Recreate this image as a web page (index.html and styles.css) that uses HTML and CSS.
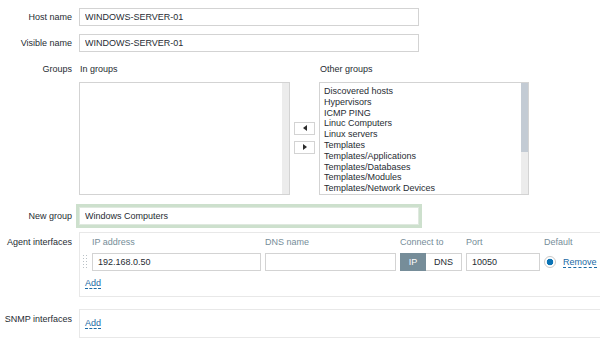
FILE: index.html
```html
<!DOCTYPE html>
<html>
<head>
    <meta charset="UTF-8">
    <title>Host</title>
    <link rel="stylesheet" href="styles.css">
</head>
<body>
    <div class="form">
        <div class="row">
            <label class="label">Host name</label>
            <input class="text wide" type="text" value="WINDOWS-SERVER-01">
        </div>
        <div class="row">
            <label class="label">Visible name</label>
            <input class="text wide" type="text" value="WINDOWS-SERVER-01">
        </div>

        <div class="row groups-row">
            <label class="label">Groups</label>
            <div class="groups">
                <div class="caption">In groups</div>
                <div></div>
                <div class="caption">Other groups</div>
                <div class="listbox">
                    <div class="items"></div>
                    <div class="scrollbar"></div>
                </div>
                <div class="move">
                    <button class="arrow"><svg width="4" height="6" viewBox="0 0 4 6"><path d="M4 0V6L0 3Z" fill="#2b2b2b"/></svg></button>
                    <button class="arrow"><svg width="4" height="6" viewBox="0 0 4 6"><path d="M0 0V6L4 3Z" fill="#2b2b2b"/></svg></button>
                </div>
                <div class="listbox">
                    <div class="items">
                        <div>Discovered hosts</div>
                        <div>Hypervisors</div>
                        <div>ICMP PING</div>
                        <div>Linuc Computers</div>
                        <div>Linux servers</div>
                        <div>Templates</div>
                        <div>Templates/Applications</div>
                        <div>Templates/Databases</div>
                        <div>Templates/Modules</div>
                        <div>Templates/Network Devices</div>
                    </div>
                    <div class="scrollbar"><div class="thumb" style="height: 62%"></div></div>
                </div>
            </div>
        </div>

        <div class="row newgroup-row">
            <label class="label">New group</label>
            <input class="text wide focused" type="text" value="Windows Computers">
        </div>

        <div class="row iface-row">
            <label class="label">Agent interfaces</label>
            <div class="iface-box">
                <div class="iface-grid">
                    <div></div>
                    <div class="head">IP address</div>
                    <div class="head">DNS name</div>
                    <div class="head">Connect to</div>
                    <div class="head">Port</div>
                    <div class="head">Default</div>

                    <div class="handle"><svg width="6" height="16" viewBox="0 0 6 16">
                        <g fill="#b9c1c6">
                            <rect x="0" y="1" width="1" height="1"/><rect x="3" y="1" width="1" height="1"/>
                            <rect x="0" y="4" width="1" height="1"/><rect x="3" y="4" width="1" height="1"/>
                            <rect x="0" y="7" width="1" height="1"/><rect x="3" y="7" width="1" height="1"/>
                            <rect x="0" y="10" width="1" height="1"/><rect x="3" y="10" width="1" height="1"/>
                            <rect x="0" y="13" width="1" height="1"/><rect x="3" y="13" width="1" height="1"/>
                        </g>
                    </svg></div>
                    <input class="text" type="text" value="192.168.0.50">
                    <input class="text" type="text" value="">
                    <div class="toggle">
                        <span class="opt active">IP</span>
                        <span class="opt">DNS</span>
                    </div>
                    <input class="text" type="text" value="10050">
                    <div class="default">
                        <span class="radio"></span>
                        <a class="link" href="#">Remove</a>
                    </div>
                </div>
                <a class="link add" href="#">Add</a>
            </div>
        </div>

        <div class="row iface-row snmp-row">
            <label class="label">SNMP interfaces</label>
            <div class="iface-box">
                <a class="link add" href="#">Add</a>
            </div>
        </div>
    </div>
</body>
</html>
```

FILE: styles.css
```css
html, body {
    margin: 0;
    overflow: hidden;
    background: #fff;
}
body {
    font-family: 'Liberation Sans', Arial, sans-serif;
    font-size: 9px;
    color: #1f2c33;
}
.form {
    padding-top: 8px;
    width: 680px;
}
.row {
    display: grid;
    grid-template-columns: 72px 1fr;
    column-gap: 7px;
    margin-bottom: 8px;
}
.label {
    text-align: right;
    line-height: 18px;
    white-space: nowrap;
}
.text {
    box-sizing: border-box;
    height: 18px;
    margin: 0;
    padding: 0 5px;
    border: 1px solid #d3d3d3;
    font-family: inherit;
    font-size: 9px;
    color: #1f2c33;
    background: #fff;
    outline: none;
}
.wide {
    width: 340px;
}
.focused {
    border-color: #dfe9df;
    box-shadow: 0 0 0 3px #cde0cd;
}

/* groups */
.groups-row {
    margin-top: 12px;
    margin-bottom: 12px;
}
.groups-row .label {
    line-height: 11px;
}
.groups {
    display: grid;
    grid-template-columns: 211px 21px 210px;
    column-gap: 4px;
    row-gap: 7px;
}
.caption {
    line-height: 11px;
    padding-left: 1px;
}
.listbox {
    box-sizing: border-box;
    height: 113px;
    border: 1px solid #d3d3d3;
    display: flex;
}
.items {
    flex: 1;
    padding: 3px 4px;
    line-height: 10.8px;
    white-space: nowrap;
    overflow: hidden;
}
.scrollbar {
    width: 7px;
    background: #ececec;
}
.thumb {
    background: #c3cbd4;
}
.move {
    display: flex;
    flex-direction: column;
    justify-content: center;
    gap: 6px;
    padding-bottom: 2px;
}
.arrow {
    width: 21px;
    height: 13px;
    padding: 0;
    border: 1px solid #d3d3d3;
    background: #fff;
    display: flex;
    align-items: center;
    justify-content: center;
}

/* interfaces */
.newgroup-row {
    margin-top: 12px;
    margin-bottom: 7px;
}
.iface-row .label {
    line-height: 11px;
    padding-top: 5px;
}
.iface-box {
    border: 1px solid #e8e8e8;
    border-right: none;
    padding: 4px 0 7px 4px;
}
.iface-grid {
    display: grid;
    grid-template-columns: 4px 169px 131px 62px 74px auto;
    column-gap: 4px;
    row-gap: 5px;
    align-items: center;
    margin-bottom: 7px;
}
.head {
    color: #768d99;
    line-height: 11px;
}
.handle {
    height: 16px;
    margin-left: -1px;
}
.toggle {
    display: flex;
    height: 18px;
}
.opt {
    box-sizing: border-box;
    display: flex;
    align-items: center;
    justify-content: center;
    border: 1px solid #d3d3d3;
    color: #1f2c33;
}
.opt:first-child {
    width: 26px;
}
.opt:last-child {
    width: 36px;
    border-left: none;
}
.opt.active {
    background: #768d99;
    border-color: #768d99;
    color: #fff;
}
.default {
    display: flex;
    align-items: center;
    gap: 7px;
}
.radio {
    box-sizing: border-box;
    width: 12px;
    height: 12px;
    border-radius: 50%;
    border: 1px solid #c9c9c9;
    background: radial-gradient(circle, #0b73b5 0, #0b73b5 3px, #fff 3.6px);
}
.link {
    color: #1a6aa6;
    text-decoration: none;
    border-bottom: 1px dashed #1a6aa6;
    line-height: 10px;
}
.add {
    display: inline-block;
    margin-left: 1px;
}
.snmp-row .iface-box {
    padding-top: 8px;
    padding-bottom: 8px;
}
.snmp-row {
    margin-top: 12px;
}
```
